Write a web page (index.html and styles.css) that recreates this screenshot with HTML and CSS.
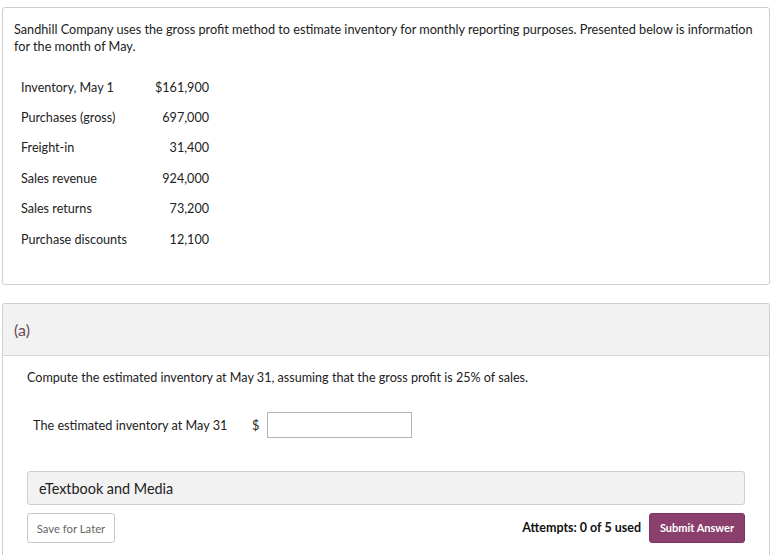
FILE: index.html
```html
<!DOCTYPE html>
<html>
<head>
<meta charset="utf-8">
<link rel="stylesheet" href="styles.css">
</head>
<body>
<div class="page">
  <section class="card intro">
    <p class="lead">Sandhill Company uses the gross profit method to estimate inventory for monthly reporting purposes. Presented below is information for the month of May.</p>
    <div class="data">
      <div class="row"><span class="lbl">Inventory, May 1</span><span class="val">$161,900</span></div>
      <div class="row"><span class="lbl">Purchases (gross)</span><span class="val">697,000</span></div>
      <div class="row"><span class="lbl">Freight-in</span><span class="val">31,400</span></div>
      <div class="row"><span class="lbl">Sales revenue</span><span class="val">924,000</span></div>
      <div class="row"><span class="lbl">Sales returns</span><span class="val">73,200</span></div>
      <div class="row"><span class="lbl">Purchase discounts</span><span class="val">12,100</span></div>
    </div>
  </section>
  <section class="card part">
    <div class="part-head">(a)</div>
    <div class="part-body">
      <p class="question">Compute the estimated inventory at May 31, assuming that the gross profit is 25% of sales.</p>
      <div class="answer">
        <span class="answer-lbl">The estimated inventory at May 31</span>
        <span class="cur">$</span>
        <span class="input"></span>
      </div>
      <div class="media">eTextbook and Media</div>
      <div class="actions">
        <span class="btn save">Save for Later</span>
        <span class="spacer"></span>
        <span class="attempts">Attempts: 0 of 5 used</span>
        <span class="btn submit">Submit Answer</span>
      </div>
    </div>
  </section>
</div>
</body>
</html>
```
FILE: styles.css
```css
html, body {
  margin: 0;
  padding: 0;
  background: #fff;
  overflow: hidden;
}
body {
  font-family: Lato, "Open Sans", sans-serif;
  color: #222;
}
.page {
  padding: 7px 3px 0 2px;
  display: flex;
  flex-direction: column;
  gap: 18px;
}
.card {
  border: 1px solid #cfcfcf;
  border-radius: 3px;
  background: #fff;
}
.intro {
  padding: 13px 12px 0 11px;
  box-sizing: content-box;
  height: 263px;
}
.lead {
  margin: 0;
  font-size: 12.7px;
  line-height: 17px;
}
.data {
  margin-top: 17px;
  padding-left: 7px;
  display: flex;
  flex-direction: column;
}
.row {
  display: flex;
  height: 30.4px;
  align-items: center;
  font-size: 12.6px;
}
.lbl {
  width: 128px;
}
.val {
  width: 60px;
  text-align: right;
}
.part {
  height: 300px;
  border-bottom: none;
  border-radius: 3px 3px 0 0;
}
.part-head {
  height: 51px;
  background: #f2f2f2;
  border-bottom: 1px solid #d4d4d4;
  display: flex;
  align-items: center;
  padding-left: 11px;
  font-size: 16px;
  color: #6a4a58;
  border-radius: 3px 3px 0 0;
}
.part-body {
  padding: 14px 24px 0 24px;
}
.question {
  margin: 0;
  font-size: 12.6px;
  line-height: 16px;
}
.answer {
  margin-top: 26px;
  display: flex;
  align-items: center;
  padding-left: 6px;
  font-size: 12.7px;
}
.answer-lbl {
  width: 219px;
}
.cur {
  width: 15px;
}
.input {
  width: 143px;
  height: 24px;
  border: 1px solid #b5b5b5;
  background: #fff;
}
.media {
  margin-top: 33px;
  height: 32px;
  background: #f2f2f2;
  border: 1px solid #cfcfcf;
  border-radius: 3px;
  display: flex;
  align-items: center;
  padding-left: 11px;
  font-size: 14.4px;
  color: #222;
}
.actions {
  margin-top: 7px;
  display: flex;
  align-items: center;
}
.spacer { flex: 1; }
.btn {
  display: inline-flex;
  align-items: center;
  justify-content: center;
  border-radius: 3px;
  font-size: 11px;
  box-sizing: border-box;
}
.save {
  width: 88px;
  height: 30px;
  border: 1px solid #c8c8c8;
  color: #666;
  background: #fff;
  margin-top: 1px;
  font-size: 11.3px;
}
.attempts {
  font-size: 12.5px;
  font-weight: 700;
  color: #111;
  margin-right: 8px;
}
.submit {
  width: 96px;
  height: 30px;
  background: #8a3f6c;
  color: #fff;
  font-weight: 700;
  border: 1px solid #7a3560;
}
```
